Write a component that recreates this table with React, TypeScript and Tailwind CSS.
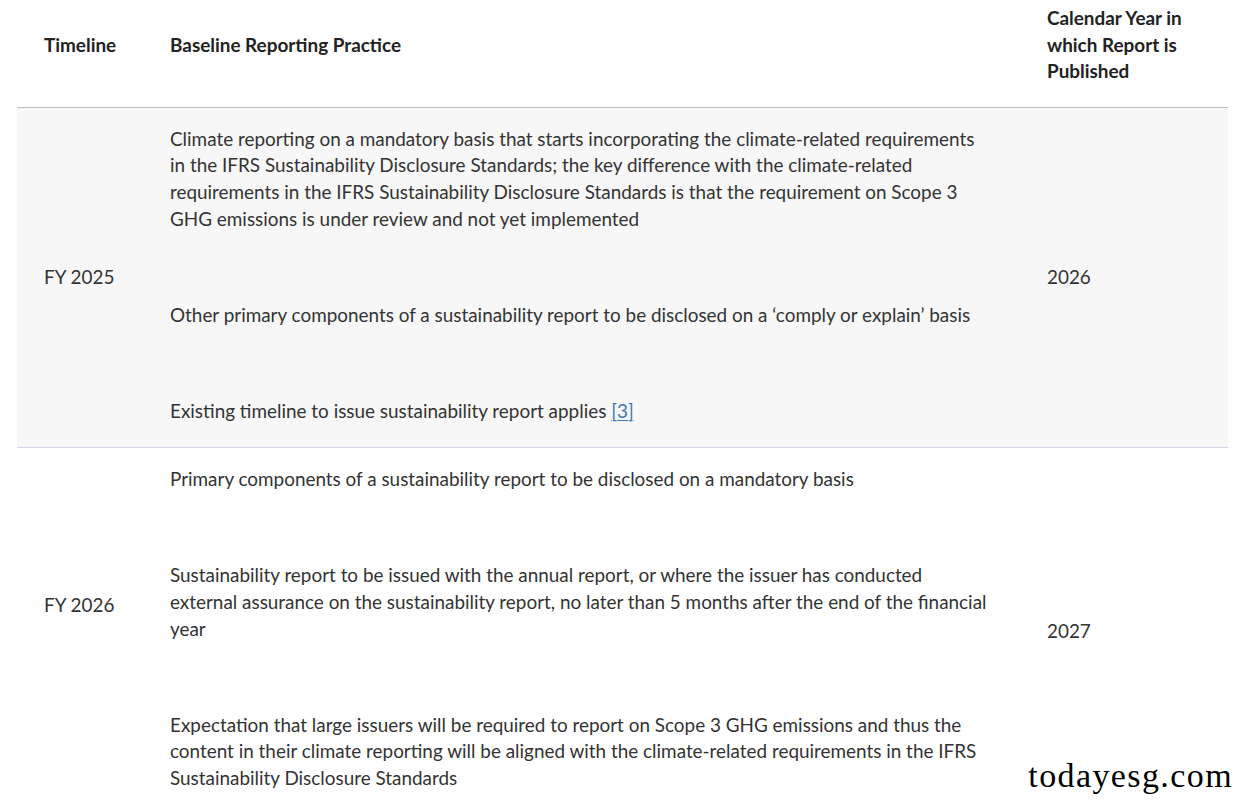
import React from 'react';

const rows = [
  {
    timeline: 'FY 2025',
    year: '2026',
    bg: 'bg-[#f7f7f7]',
    border: 'border-b border-[#d3d3e6]',
    timelinePad: '',
    items: [
      'Climate reporting on a mandatory basis that starts incorporating the climate-related requirements in the IFRS Sustainability Disclosure Standards; the key difference with the climate-related requirements in the IFRS Sustainability Disclosure Standards is that the requirement on Scope 3 GHG emissions is under review and not yet implemented',
      'Other primary components of a sustainability report to be disclosed on a ‘comply or explain’ basis',
      'LINK',
    ],
  },
  {
    timeline: 'FY 2026',
    year: '2027',
    bg: 'bg-white',
    border: '',
    timelinePad: 'pb-[52px]',
    items: [
      'Primary components of a sustainability report to be disclosed on a mandatory basis',
      'Sustainability report to be issued with the annual report, or where the issuer has conducted external assurance on the sustainability report, no later than 5 months after the end of the financial year',
      'Expectation that large issuers will be required to report on Scope 3 GHG emissions and thus the content in their climate reporting will be aligned with the climate-related requirements in the IFRS Sustainability Disclosure Standards',
    ],
  },
];

const App: React.FC = () => {
  return (
    <div className="relative h-[802px] overflow-hidden bg-white font-['Lato','Noto_Sans',sans-serif] text-[18.9px] leading-[26.6px] text-[#333]">
      <div className="ml-[17px] w-[1211px]">
        {/* header */}
        <div className="grid grid-cols-[126px_877px_208px] border-b border-[#bdbdbd] font-bold text-[#222]">
          <div className="flex items-center pl-[27px] pt-[5px] pb-[22px]">Timeline</div>
          <div className="flex items-center pl-[27px] pt-[5px] pb-[22px]">Baseline Reporting Practice</div>
          <div className="pl-[27px] pr-[20px] pt-[5px] pb-[22px]">Calendar Year in which Report is Published</div>
        </div>

        {rows.map((row) => (
          <div key={row.timeline} className={`grid grid-cols-[126px_877px_208px] ${row.bg} ${row.border}`}>
            <div className={`flex items-center pl-[27px] ${row.timelinePad}`}>{row.timeline}</div>
            <div className="flex flex-col gap-[69.5px] pl-[27px] pr-[30px] pt-[18px] pb-[23px]">
              {row.items.map((item, i) =>
                item === 'LINK' ? (
                  <p key={i}>
                    Existing timeline to issue sustainability report applies{' '}
                    <a className="text-[#3b79bd] underline decoration-[1px] underline-offset-2">[3]</a>
                  </p>
                ) : (
                  <p key={i}>{item}</p>
                )
              )}
            </div>
            <div className="flex items-center pl-[27px]">{row.year}</div>
          </div>
        ))}
      </div>

      <div className="absolute right-[1px] bottom-[9px] font-['Liberation_Serif',serif] text-[34px] leading-none tracking-[1.4px] text-black">
        todayesg.com
      </div>
    </div>
  );
};

export default App;
